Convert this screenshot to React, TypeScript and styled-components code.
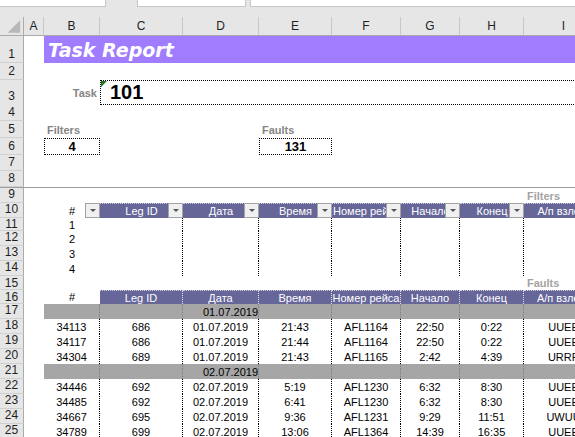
import React from "react";
import styled, { createGlobalStyle, css } from "styled-components";

const GlobalStyle = createGlobalStyle`
  html, body {
    margin: 0;
    padding: 0;
    background: #ffffff;
  }
  body {
    width: 575px;
    height: 437px;
    overflow: hidden;
    font-family: "Liberation Sans", Arial, sans-serif;
  }
`;

// widths of: row header, A, B, C, D, E, F, G, H, I
const COLUMN_WIDTHS = [24, 20, 56, 83, 76, 73, 69, 59, 64, 80];
const TRACKS = COLUMN_WIDTHS.map((w) => `${w}px`).join(" ");
const LETTERS = ["A", "B", "C", "D", "E", "F", "G", "H", "I"];

const FILTER_HEADERS = ["Leg ID", "Дата", "Время", "Номер рейса", "Начало", "Конец", "А/п взлета"];

type Fault = string[] | { group: string };

const FAULTS: Fault[] = [
  { group: "01.07.2019" },
  ["34113", "686", "01.07.2019", "21:43", "AFL1164", "22:50", "0:22", "UUEE"],
  ["34117", "686", "01.07.2019", "21:44", "AFL1164", "22:50", "0:22", "UUEE"],
  ["34304", "689", "01.07.2019", "21:43", "AFL1165", "2:42", "4:39", "URRP"],
  { group: "02.07.2019" },
  ["34446", "692", "02.07.2019", "5:19", "AFL1230", "6:32", "8:30", "UUEE"],
  ["34485", "692", "02.07.2019", "6:41", "AFL1230", "6:32", "8:30", "UUEE"],
  ["34667", "695", "02.07.2019", "9:36", "AFL1231", "9:29", "11:51", "UWUU"],
  ["34789", "699", "02.07.2019", "13:06", "AFL1364", "14:39", "16:35", "UUEE"],
];

const Screen = styled.div`
  width: 575px;
  height: 437px;
  overflow: hidden;
  background: #ffffff;
`;

/* ---------- top chrome ---------- */

const TopStrip = styled.div`
  height: 17px;
  display: flex;
  align-items: flex-start;
  background: #e6e6e6;
`;

const StripBox = styled.div<{ $w: number; $gap: number }>`
  flex: none;
  box-sizing: border-box;
  width: ${(p) => p.$w}px;
  margin-left: ${(p) => p.$gap}px;
  height: 7px;
  background: #ffffff;
  border: 1px solid #c6c6c6;
  border-top: none;
`;

const HeaderRow = styled.div`
  display: grid;
  grid-template-columns: ${TRACKS};
  height: 19px;
  box-sizing: border-box;
  background: #e6e6e6;
  border-bottom: 1px solid #ababab;
`;

const Corner = styled.div`
  border-right: 1px solid #ababab;
  display: flex;
`;

const ColLetter = styled.div`
  display: flex;
  align-items: center;
  justify-content: center;
  font-size: 12px;
  color: #1f1f1f;
  border-right: 1px solid #c8c8c8;
`;

/* ---------- sheet ---------- */

const SheetRow = styled.div<{ $h: number; $rule?: boolean }>`
  display: grid;
  grid-template-columns: ${TRACKS};
  height: ${(p) => p.$h}px;
  box-sizing: border-box;
  ${(p) =>
    p.$rule &&
    css`
      border-top: 1px solid #9e9e9e;
    `}
`;

const RowNum = styled.div<{ $tight?: boolean }>`
  display: flex;
  align-items: flex-end;
  justify-content: center;
  box-sizing: border-box;
  overflow: hidden;
  background: #e6e6e6;
  border-right: 1px solid #ababab;
  border-bottom: 1px solid #d0d0d0;
  padding-bottom: ${(p) => (p.$tight ? 0 : 2)}px;
  font-size: 12px;
  line-height: 12px;
  color: #1f1f1f;
`;

const Cell = styled.div<{ $span?: number }>`
  grid-column: span ${(p) => p.$span ?? 1};
  position: relative;
  min-width: 0;
  box-sizing: border-box;
  display: flex;
  align-items: center;
  white-space: nowrap;
  font-size: 11px;
  color: #000000;
`;

const TitleBand = styled(Cell)`
  background: #a07cff;
  color: #ffffff;
  padding-left: 4px;
  font: italic bold 19px "DejaVu Sans", Verdana, sans-serif;
`;

const Caption = styled(Cell)<{ $right?: boolean }>`
  justify-content: ${(p) => (p.$right ? "flex-end" : "flex-start")};
  padding: ${(p) => (p.$right ? "0 3px 0 0" : "0 0 0 3px")};
  font-weight: bold;
  color: #858585;
`;

const SectionTag = styled(Cell)`
  padding-left: 3px;
  font-weight: bold;
  color: #a3a3a3;
`;

const TaskField = styled(Cell)`
  border: 1px dotted #000000;
  border-right: none;
  padding-left: 9px;
  font-size: 20px;
  font-weight: bold;

  &::before {
    content: "";
    position: absolute;
    left: 0;
    top: 0;
    border-top: 6px solid #1f7a1f;
    border-right: 6px solid transparent;
  }
`;

const CountField = styled(Cell)`
  justify-content: center;
  border: 1px dotted #000000;
  font-size: 13px;
  font-weight: bold;
`;

const HashCell = styled(Cell)`
  justify-content: center;
  border-top: 1px solid transparent;
`;

const HeadCell = styled(Cell)<{ $sep?: boolean }>`
  justify-content: center;
  background: #666699;
  color: #ffffff;
  border-top: 1px dotted #d2d2e2;
  ${(p) =>
    p.$sep &&
    css`
      border-right: 1px dotted #e4e4ee;
    `}
`;

const FilterButton = styled.span`
  position: absolute;
  right: 0;
  top: -1px;
  z-index: 1;
  width: 15px;
  height: 15px;
  box-sizing: border-box;
  border: 1px solid #a4a4a4;
  background: #f0f0f0;
  display: flex;
  align-items: center;
  justify-content: center;

  &::after {
    content: "";
    border-left: 3px solid transparent;
    border-right: 3px solid transparent;
    border-top: 3px solid #555555;
  }
`;

const DataCell = styled(Cell)<{ $line?: boolean }>`
  justify-content: center;
  ${(p) =>
    p.$line &&
    css`
      border-right: 1px dotted #000000;
    `}
`;

const GroupCell = styled(Cell)<{ $indent?: number }>`
  background: #a6a6a6;
  border-right: 1px dotted #7c7c7c;
  padding-left: ${(p) => p.$indent ?? 0}px;
`;

const Blank = styled(Cell)``;

function CornerMark() {
  return (
    <svg width="24" height="18" viewBox="0 0 24 18">
      <polygon points="21,3 21,16 8,16" fill="#b7b7b7" />
    </svg>
  );
}

export default function App() {
  return (
    <Screen>
      <GlobalStyle />

      <TopStrip>
        <StripBox $w={107} $gap={-1} />
        <StripBox $w={109} $gap={31} />
        <StripBox $w={340} $gap={4} />
      </TopStrip>

      <HeaderRow>
        <Corner>
          <CornerMark />
        </Corner>
        {LETTERS.map((l) => (
          <ColLetter key={l}>{l}</ColLetter>
        ))}
      </HeaderRow>

      <SheetRow $h={27}>
        <RowNum>1</RowNum>
        <Blank />
        <TitleBand $span={8}>Task Report</TitleBand>
      </SheetRow>

      <SheetRow $h={17}>
        <RowNum>2</RowNum>
        <Blank $span={9} />
      </SheetRow>

      <SheetRow $h={24}>
        <RowNum>3</RowNum>
        <Blank />
        <Caption $right>Task</Caption>
        <TaskField $span={7}>101</TaskField>
      </SheetRow>

      <SheetRow $h={17}>
        <RowNum>4</RowNum>
        <Blank $span={9} />
      </SheetRow>

      <SheetRow $h={17}>
        <RowNum>5</RowNum>
        <Blank />
        <Caption>Filters</Caption>
        <Blank $span={2} />
        <Caption>Faults</Caption>
        <Blank $span={4} />
      </SheetRow>

      <SheetRow $h={17}>
        <RowNum>6</RowNum>
        <Blank />
        <CountField>4</CountField>
        <Blank $span={2} />
        <CountField>131</CountField>
        <Blank $span={4} />
      </SheetRow>

      <SheetRow $h={16}>
        <RowNum>7</RowNum>
        <Blank $span={9} />
      </SheetRow>

      <SheetRow $h={16}>
        <RowNum>8</RowNum>
        <Blank $span={9} />
      </SheetRow>

      <SheetRow $h={16} $rule>
        <RowNum>9</RowNum>
        <Blank $span={8} />
        <SectionTag>Filters</SectionTag>
      </SheetRow>

      <SheetRow $h={15}>
        <RowNum>10</RowNum>
        <Blank />
        <HashCell>
          #
          <FilterButton />
        </HashCell>
        {FILTER_HEADERS.map((h) => (
          <HeadCell key={h}>
            {h}
            <FilterButton />
          </HeadCell>
        ))}
      </SheetRow>

      {[1, 2, 3, 4].map((n) => (
        <SheetRow key={n} $h={n === 1 ? 13 : 15}>
          <RowNum $tight={n === 1}>{10 + n}</RowNum>
          <Blank />
          <DataCell>{n}</DataCell>
          {[0, 1, 2, 3, 4, 5].map((c) => (
            <DataCell key={c} $line />
          ))}
          <Blank />
        </SheetRow>
      ))}

      <SheetRow $h={14}>
        <RowNum $tight>15</RowNum>
        <Blank $span={8} />
        <SectionTag>Faults</SectionTag>
      </SheetRow>

      <SheetRow $h={14}>
        <RowNum $tight>16</RowNum>
        <Blank />
        <DataCell>#</DataCell>
        {FILTER_HEADERS.map((h) => (
          <HeadCell key={h} $sep>
            {h}
          </HeadCell>
        ))}
      </SheetRow>

      {FAULTS.map((f, i) => (
        <SheetRow key={i} $h={15}>
          <RowNum>{17 + i}</RowNum>
          <Blank />
          {Array.isArray(f) ? (
            f.map((v, c) => (
              <DataCell key={c} $line>
                {v}
              </DataCell>
            ))
          ) : (
            <>
              <GroupCell />
              <GroupCell />
              <GroupCell $indent={20}>{f.group}</GroupCell>
              <GroupCell />
              <GroupCell />
              <GroupCell />
              <GroupCell />
              <GroupCell />
            </>
          )}
        </SheetRow>
      ))}
    </Screen>
  );
}
